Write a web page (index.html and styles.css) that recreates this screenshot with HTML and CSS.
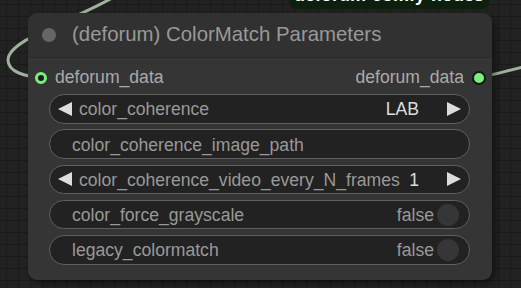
FILE: index.html
```html
<!DOCTYPE html>
<html lang="en">
<head>
    <meta charset="UTF-8">
    <meta name="viewport" content="width=device-width, initial-scale=1.0">
    <title>ColorMatch Parameters</title>
    <link rel="stylesheet" href="styles.css">
</head>
<body>
    <div class="canvas">
        <svg class="links" width="521" height="288" viewBox="0 0 521 288">
            <path d="M112,-2 C70,22 8,40 8,60 C8,72 26,77 41,77" />
            <path d="M479,77 C495,75 505,71 523,67" />
        </svg>

        <div class="badge">deforum-comfy-nodes</div>

        <div class="node">
            <div class="node-title">
                <span class="title-dot"></span>
                <span class="title-text">(deforum) ColorMatch Parameters</span>
            </div>

            <div class="node-body">
                <div class="slots">
                    <div class="slot slot-in">
                        <span class="slot-dot"></span>
                        <span>deforum_data</span>
                    </div>
                    <div class="slot slot-out">
                        <span>deforum_data</span>
                        <span class="slot-dot"></span>
                    </div>
                </div>

                <div class="widget combo">
                    <span class="arrow left"></span>
                    <span class="label">color_coherence</span>
                    <span class="value">LAB</span>
                    <span class="arrow right"></span>
                </div>
                <div class="widget text">
                    <span class="label">color_coherence_image_path</span>
                </div>
                <div class="widget combo">
                    <span class="arrow left"></span>
                    <span class="label">color_coherence_video_every_N_frames</span>
                    <span class="value">1</span>
                    <span class="arrow right"></span>
                </div>
                <div class="widget toggle">
                    <span class="label">color_force_grayscale</span>
                    <span class="state">false</span>
                    <span class="knob"></span>
                </div>
                <div class="widget toggle">
                    <span class="label">legacy_colormatch</span>
                    <span class="state">false</span>
                    <span class="knob"></span>
                </div>
            </div>
        </div>
    </div>
</body>
</html>
```

FILE: styles.css
```css
* {
    margin: 0;
    padding: 0;
    box-sizing: border-box;
}

body {
    font-family: 'Liberation Sans', Arial, sans-serif;
    background: #202020;
    overflow: hidden;
}

.canvas {
    position: relative;
    width: 521px;
    height: 288px;
    padding: 13px 0 0 28px;
    background-color: #222;
    background-image:
        linear-gradient(#1a1a1a 1px, transparent 1px),
        linear-gradient(90deg, #1a1a1a 1px, transparent 1px);
    background-size: 12px 12px;
    background-position: 6px 4px;
}

.links {
    position: absolute;
    top: 0;
    left: 0;
}

.links path {
    fill: none;
    stroke: #9fb39c;
    stroke-width: 3;
}

.badge {
    position: absolute;
    top: -15px;
    left: 289px;
    width: 200px;
    height: 24px;
    background: #0d1f0d;
    border-radius: 0 0 7px 7px;
    color: #fff;
    font-weight: bold;
    font-size: 18px;
    line-height: 20px;
    text-align: center;
    overflow: hidden;
}

.node {
    position: relative;
    width: 464px;
    height: 267px;
    background: #353535;
    border-radius: 9px;
    box-shadow: 3px 3px 6px rgba(0, 0, 0, 0.45);
    overflow: hidden;
}

.node-title {
    display: flex;
    align-items: center;
    height: 45px;
    padding-left: 14px;
    background: #313131;
    border-bottom: 1px solid #2b2b2b;
}

.title-dot {
    width: 14px;
    height: 14px;
    border-radius: 50%;
    background: #666;
    margin: 0 16px 1px 0;
}

.title-text {
    color: #999;
    font-size: 20.4px;
    padding-bottom: 1px;
}

.node-body {
    padding: 0 22px 0 21px;
}

.slots {
    display: flex;
    justify-content: space-between;
    align-items: center;
    height: 36px;
    padding-top: 3px;
    margin: 0 -16px 0 -14px;
    color: #aaa;
    font-size: 17.6px;
}

.slot {
    display: flex;
    align-items: center;
}

.slot-dot {
    border-radius: 50%;
}

.slot-in {
    gap: 8px;
}

.slot-in .slot-dot {
    width: 12px;
    height: 12px;
    background: #1c1c1c;
    border: 3px solid #7af07a;
}

.slot-out {
    gap: 8px;
}

.slot-out .slot-dot {
    width: 14px;
    height: 14px;
    background: #7af07a;
    border: 2px solid #161616;
}

.widget {
    display: flex;
    align-items: center;
    height: 29.5px;
    margin-bottom: 5.8px;
    padding: 2px 10px 0 22px;
    background: #222;
    border: 1.5px solid #606060;
    border-radius: 15px;
    font-size: 17.6px;
}

.widget .label {
    flex: 1;
    color: #999;
    white-space: nowrap;
}

.widget .value {
    color: #ddd;
}

.combo {
    padding: 2px 8px 0 8px;
}

.arrow {
    width: 0;
    height: 0;
    margin-bottom: 2px;
    border-top: 7.5px solid transparent;
    border-bottom: 7.5px solid transparent;
}

.arrow.left {
    border-right: 14px solid #ddd;
    margin-right: 7px;
}

.arrow.right {
    border-left: 14px solid #ddd;
    margin-left: 28px;
}

.toggle .state {
    color: #999;
}

.knob {
    width: 22px;
    height: 22px;
    border-radius: 50%;
    background: #363636;
    margin: 0 0 2px 3px;
}
```
